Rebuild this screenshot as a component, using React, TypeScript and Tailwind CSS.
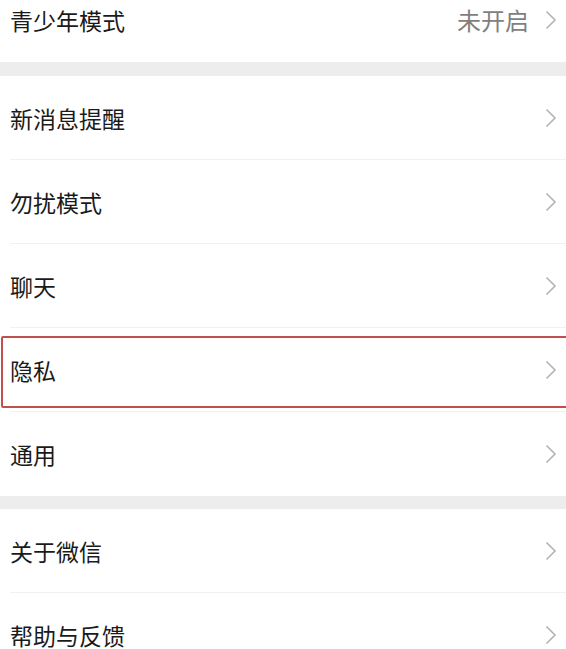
import { ReactNode } from 'react';

const FONT = '"Noto Sans CJK SC", "Noto Sans", sans-serif';

function Chevron() {
  return (
    <svg width="12" height="20" viewBox="0 0 12 20" className="shrink-0">
      <path d="M1.5 1.5 L10 10 L1.5 18.5" fill="none" stroke="#b3b3b3" strokeWidth="1.6" />
    </svg>
  );
}

interface RowProps {
  title: string;
  value?: string;
  divider?: boolean;
  highlight?: boolean;
  className?: string;
}

function Row({ title, value, divider, highlight, className = '' }: RowProps) {
  return (
    <div className={`relative flex h-[84px] items-center bg-white pl-[10px] pr-[9px] ${className}`}>
      <span className="flex-1 text-[23px] leading-none text-[#1a1a1a]">{title}</span>
      {value && <span className="mr-[16px] text-[24px] leading-none text-[#7f7f7f]">{value}</span>}
      <Chevron />
      {divider && <div className="absolute bottom-0 left-[10px] right-0 h-px bg-[#f0f0f0]" />}
      {highlight && (
        <div className="absolute left-px right-[-4px] top-[8px] bottom-[4px] rounded-[2px] border-2 border-[#c0504d]" />
      )}
    </div>
  );
}

function Group({ children }: { children: ReactNode }) {
  return <div className="bg-white">{children}</div>;
}

export default function App() {
  return (
    <div className="h-[649px] w-[566px] overflow-hidden bg-white" style={{ fontFamily: FONT }}>
      <Group>
        <Row title="青少年模式" value="未开启" className="mt-[-22px]" />
      </Group>
      <div className="h-[14px] bg-[#ededed]" />
      <Group>
        <Row title="新消息提醒" divider />
        <Row title="勿扰模式" divider />
        <Row title="聊天" divider />
        <Row title="隐私" divider highlight />
        <Row title="通用" />
      </Group>
      <div className="h-[13px] bg-[#ededed]" />
      <Group>
        <Row title="关于微信" divider />
        <Row title="帮助与反馈" />
      </Group>
    </div>
  );
}
